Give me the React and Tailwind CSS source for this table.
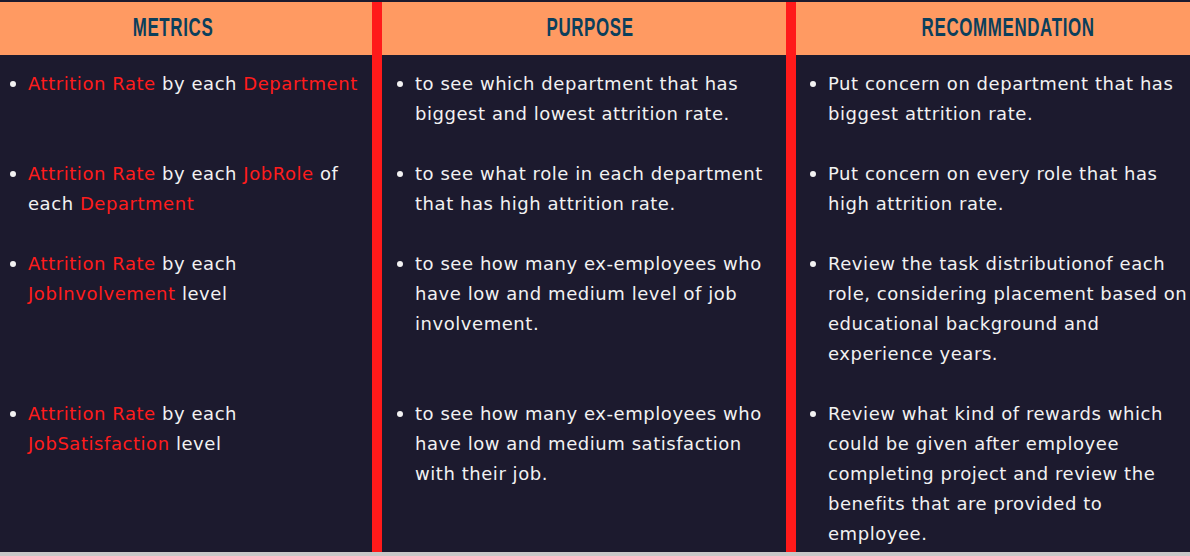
const headers = ["METRICS", "PURPOSE", "RECOMMENDATION"];

const R = ({ children }) => <span className="text-[#ff1c1c]">{children}</span>;

const rows = [
  [
    [<><R>Attrition Rate</R> by each <R>Department</R></>],
    ["to see which department that has", "biggest and lowest attrition rate."],
    ["Put concern on department that has", "biggest attrition rate."],
  ],
  [
    [<><R>Attrition Rate</R> by each <R>JobRole</R> of</>, <>each <R>Department</R></>],
    ["to see what role in each department", "that has high attrition rate."],
    ["Put concern on every role that has", "high attrition rate."],
  ],
  [
    [<><R>Attrition Rate</R> by each</>, <><R>JobInvolvement</R> level</>],
    ["to see how many ex-employees who", "have low and medium level of job", "involvement."],
    [
      "Review the task distributionof each",
      "role, considering placement based on",
      "educational background and",
      "experience years.",
    ],
  ],
  [
    [<><R>Attrition Rate</R> by each</>, <><R>JobSatisfaction</R> level</>],
    ["to see how many ex-employees who", "have low and medium satisfaction", "with their job."],
    [
      "Review what kind of rewards which",
      "could be given after employee",
      "completing project and review the",
      "benefits that are provided to",
      "employee.",
    ],
  ],
];

const colPad = ["pl-[10px]", "pl-[15px]", "pl-[14px]"];
const colBorder = ["border-r-[10px] border-[#ff1a1a]", "border-r-[10px] border-[#ff1a1a]", ""];
const headShift = ["pr-[26px]", "pl-[12px]", "pl-[30px]"];

function Item({ lines }) {
  return (
    <div className="flex gap-[12px]">
      <div className="h-[30px] flex items-center shrink-0">
        <span className="block w-[6px] h-[6px] rounded-full bg-[#f2f2f2]" />
      </div>
      <div className="flex flex-col">
        {lines.map((l, i) => (
          <span key={i} className="whitespace-nowrap leading-[30px]">
            {l}
          </span>
        ))}
      </div>
    </div>
  );
}

export default function App() {
  return (
    <div className="w-[1190px] h-[556px] bg-[#c8c8c8] overflow-hidden">
      <div
        className="bg-[#1c1a2e] pt-[2px] grid grid-cols-[382px_414px_1fr] text-[#f2f2f2] text-[18px] tracking-[0.55px]"
        style={{ fontFamily: '"DejaVu Sans", sans-serif' }}
      >
        {headers.map((h, i) => (
          <div
            key={h}
            className={`h-[53px] pb-[4px] bg-[#ff9a62] flex items-center justify-center ${colBorder[i]} ${headShift[i]}`}
          >
            <span
              className="text-[#0b3f5c] text-[26px] font-bold tracking-[1px] leading-none scale-x-[0.65] inline-block"
              style={{ fontFamily: '"Liberation Sans", sans-serif' }}
            >
              {h}
            </span>
          </div>
        ))}
        {rows.map((row, r) =>
          row.map((lines, c) => (
            <div
              key={`${r}-${c}`}
              className={`${colPad[c]} ${colBorder[c]} ${r === 0 ? "pt-[14px]" : ""} ${
                r === rows.length - 1 ? "pb-[3px]" : "pb-[30px]"
              }`}
            >
              <Item lines={lines} />
            </div>
          ))
        )}
      </div>
    </div>
  );
}
